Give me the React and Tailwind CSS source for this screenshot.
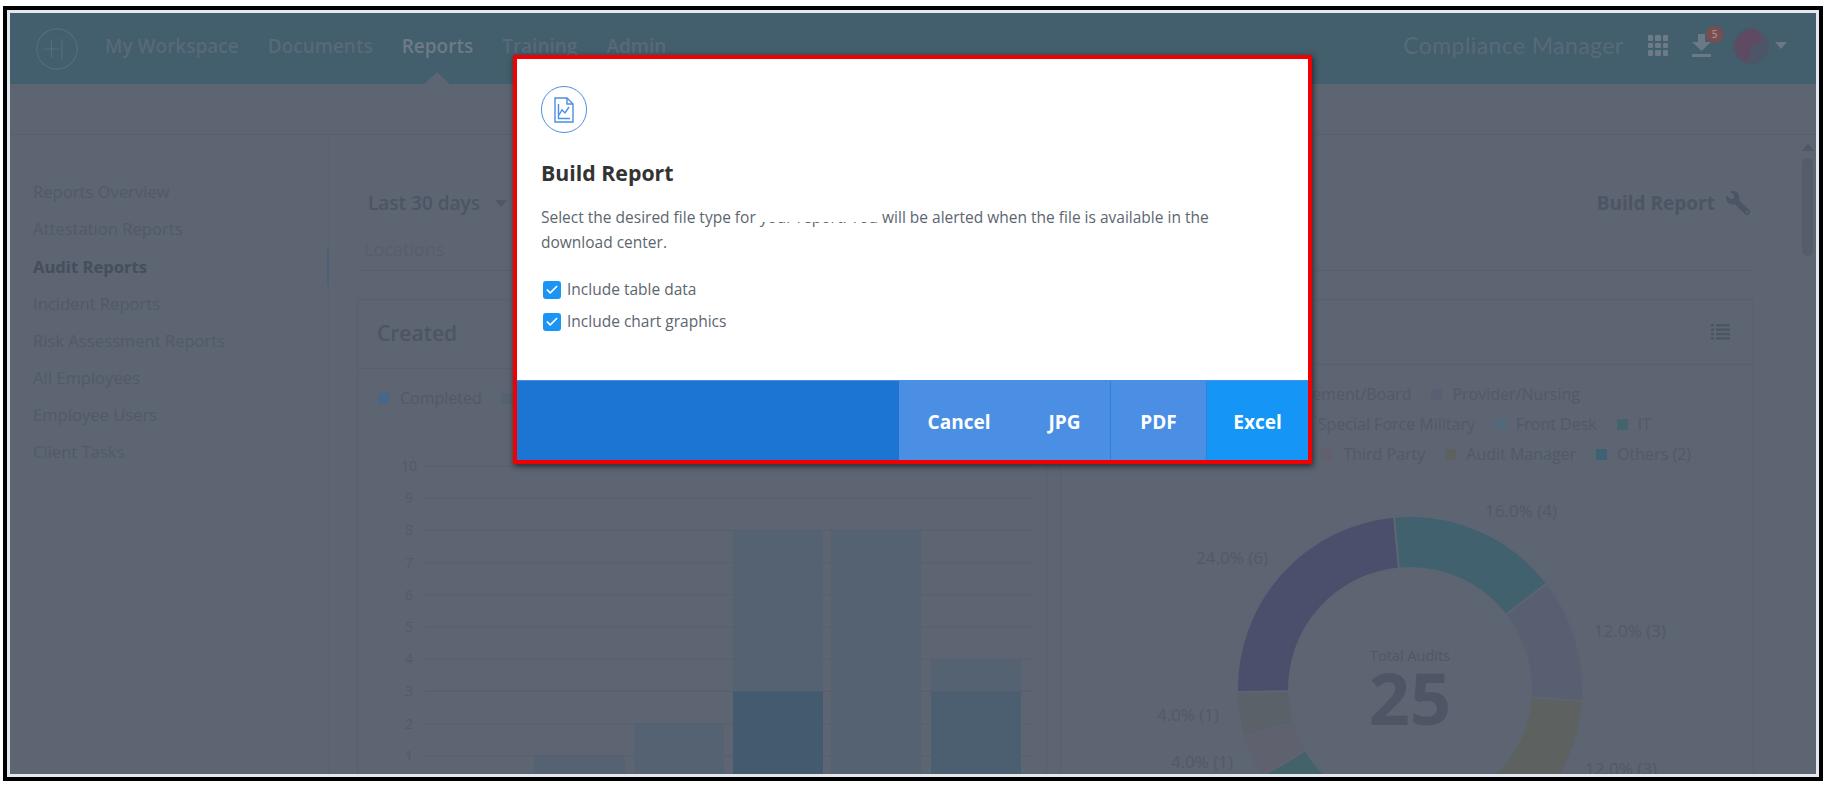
import { Check } from 'lucide-react';
import { FaWrench } from 'react-icons/fa';

const navItems = ['My Workspace', 'Documents', 'Reports', 'Training', 'Admin'];
const sideItems = ['Reports Overview', 'Attestation Reports', 'Audit Reports', 'Incident Reports', 'Risk Assessment Reports', 'All Employees', 'Employee Users', 'Client Tasks'];

const legendRows = [
  { pad: 'pr-[173px]', items: [['Management/Board', 'bg-[#566172]'], ['Provider/Nursing', 'bg-[#5a5f72]']] },
  { pad: 'pr-[102px]', items: [['Special Force Military', 'bg-[#4a5168]'], ['Front Desk', 'bg-[#51697a]'], ['IT', 'bg-[#44636c]']] },
  { pad: 'pr-[62px]', items: [['Clinical', 'bg-[#5a6169]'], ['Third Party', 'bg-[#635f6e]'], ['Audit Manager', 'bg-[#5d6160]'], ['Others (2)', 'bg-[#3f6273]']] },
];

// angles in degrees, clockwise from 12 o'clock
const segments = [
  [-5.3, 52.3, '#41616f'],
  [52.3, 94, '#585f70'],
  [94, 137, '#5d6160'],
  [137, 200, '#52606c'],
  [200, 239.5, '#436269'],
  [239.5, 254, '#5f616f'],
  [254, 269, '#5a6169'],
  [269, 354.7, '#4a4f6b'],
];

function arc(cx, cy, ro, ri, a, b) {
  const pt = (r, d) => {
    const t = (d * Math.PI) / 180;
    return `${(cx + r * Math.sin(t)).toFixed(2)} ${(cy - r * Math.cos(t)).toFixed(2)}`;
  };
  const large = b - a > 180 ? 1 : 0;
  return `M${pt(ro, a)} A${ro} ${ro} 0 ${large} 1 ${pt(ro, b)} L${pt(ri, b)} A${ri} ${ri} 0 ${large} 0 ${pt(ri, a)} Z`;
}

function BarChart() {
  const ticks = [10, 9, 8, 7, 6, 5, 4, 3, 2, 1];
  const y = (n) => 788 - n * 32.2;
  return (
    <svg width="688" height="340" className="block mt-[13px]" viewBox="358 440 688 340">
      {ticks.map((n) => (
        <g key={n}>
          <line x1="425" x2="1032" y1={y(n)} y2={y(n)} stroke="#585f6d" strokeWidth="1" />
          <text x="409" y={y(n) + 5} textAnchor="middle" fontSize="14" fill="#535b69">{n}</text>
        </g>
      ))}
      <rect x="534" y={y(1)} width="91" height="40" fill="#546272" />
      <rect x="634" y={y(2)} width="90" height="80" fill="#546272" />
      <rect x="733" y={y(8)} width="90" height="260" fill="#546272" />
      <rect x="733" y={y(3)} width="90" height="100" fill="#435a6f" />
      <rect x="831" y={y(8)} width="90" height="260" fill="#546272" />
      <rect x="931" y={y(4)} width="90" height="130" fill="#546272" />
      <rect x="931" y={y(3)} width="90" height="100" fill="#4c5f71" />
    </svg>
  );
}

function Donut() {
  const labels = [
    ['16.0% (4)', 1523, 518],
    ['24.0% (6)', 1234, 565],
    ['12.0% (3)', 1632, 638],
    ['4.0% (1)', 1190, 722],
    ['4.0% (1)', 1204, 769],
    ['12.0% (3)', 1623, 776],
  ];
  return (
    <svg width="691" height="310" className="block" viewBox="1063 482 691 310">
      {segments.map(([a, b, c]) => (
        <path key={a} d={arc(1412, 690, 173, 121, a, b)} fill={c} stroke="#5d6472" strokeWidth="2" />
      ))}
      {labels.map(([t, x, ly]) => (
        <text key={t + ly} x={x} y={ly} textAnchor="middle" fontSize="17" fill="#525a68">{t}</text>
      ))}
      <text x="1412" y="662" textAnchor="middle" fontSize="14.5" fill="#505866">Total Audits</text>
      <text x="1412" y="726" textAnchor="middle" fontSize="72" fontWeight="700" fill="#4e5564">25</text>
    </svg>
  );
}

function Logo() {
  return (
    <svg width="42" height="42" viewBox="0 0 42 42" fill="none" stroke="#566c7c" strokeWidth="1.2">
      <circle cx="21" cy="21" r="20.2" />
      <path d="M8 21h15M15.5 12v18M26 11v20" />
    </svg>
  );
}

function ReportIcon() {
  return (
    <svg width="24" height="28" viewBox="0 0 24 28" fill="none" stroke="#4a90e2" strokeWidth="1.4">
      <path d="M3 2h12l6 6v18H3z" />
      <path d="M15 2v6h6" />
      <path d="M6.5 8v14.5H18" />
      <path d="M7 19l3-5 3 3 4-6" />
    </svg>
  );
}

function ModalCheck({ label }) {
  return (
    <label className="flex items-center gap-[6px] h-[18px]">
      <span className="w-[18px] h-[18px] ml-[2px] rounded-[3px] bg-[#1a94f5] flex items-center justify-center">
        <Check size={14} strokeWidth={3} className="text-white" />
      </span>
      <span className="text-[15.5px] text-[#5c6670]">{label}</span>
    </label>
  );
}

export default function App() {
  return (
    <div className="w-[1828px] h-[786px] bg-white pl-[3px] pr-[5px] pt-[6px] pb-[5px] font-['Open_Sans',sans-serif]">
      <div className="h-full border-4 border-black">
        <div className="h-full border-[3px] border-[#e4e7ee]">
          <div className="relative h-full overflow-hidden bg-[#5d6472]">
            {/* Top nav */}
            <div className="h-[71px] bg-[#435e6c] flex items-center justify-between pl-[26px] pr-[29px]">
              <div className="flex items-center">
                <Logo />
                <div className="flex items-center gap-[29px] ml-[27px] -mt-[5px]">
                  {navItems.map((n) => (
                    <div key={n} className={`relative text-[19px] font-semibold ${n === 'Reports' ? 'text-[#6d7b88]' : 'text-[#586a79]'}`}>
                      {n}
                      {n === 'Reports' && (
                        <div className="absolute left-[21px] top-[40px] w-0 h-0 border-x-[14px] border-x-transparent border-b-[13px] border-b-[#5d6472]" />
                      )}
                    </div>
                  ))}
                </div>
              </div>
              <div className="flex items-center">
                <span className="text-[23px] text-[#586a79] font-['Lato',sans-serif] tracking-[0.4px] mr-[24px] -mt-[6px]">Compliance Manager</span>
                <div className="grid grid-cols-3 gap-[2px] mr-[24px] -mt-[6px]">
                  {[1, 2, 3, 4, 5, 6, 7, 8, 9].map((i) => (
                    <span key={i} className="w-[5.5px] h-[5.5px] rounded-[1px] bg-[#6d7a87]" />
                  ))}
                </div>
                <div className="relative mr-[22px] -mt-[6px]">
                  <svg width="19" height="24" viewBox="0 0 19 24" fill="#6b7886" className="block">
                    <path d="M6 0h7v8h6l-9.5 9L0 8h6z" />
                    <rect y="20" width="19" height="3" />
                  </svg>
                  <span className="absolute -top-[8px] left-[14px] w-[17px] h-[17px] rounded-full bg-[#7a4e50] text-[10px] font-semibold text-[#a5898c] flex items-center justify-center">5</span>
                </div>
                <svg width="36" height="36" viewBox="0 0 36 36" className="-mt-[6px] mr-[6px]">
                  <circle cx="18" cy="18" r="18" fill="#4c5668" />
                  <path d="M2 18C4 8 12 1 20 1c6 4 10 8 8 13-4 2-8 1-10 5-1 5-2 10-4 15C7 31 2 25 2 18z" fill="#5f4a62" />
                </svg>
                <span className="w-0 h-0 -mt-[6px] border-x-[6px] border-x-transparent border-t-[7px] border-t-[#6b7886]" />
              </div>
            </div>

            {/* Sub bar */}
            <div className="h-[51px] border-b border-[#585f6d]" />

            <div className="flex h-[639px]">
              {/* Sidebar */}
              <div className="w-[319px] shrink-0 border-r border-[#5a616f] pt-[39px]">
                {sideItems.map((s) => (
                  <div
                    key={s}
                    className={`h-[37.2px] pl-[23px] flex items-center text-[16.6px] -mr-[1px] ${s === 'Audit Reports' ? 'font-bold text-[#454e5d] border-r-2 border-[#4a6273]' : 'text-[#515a69]'}`}
                  >
                    {s}
                  </div>
                ))}
              </div>

              {/* Main */}
              <div className="flex-1 pl-[28px] pr-[62px] min-w-0">
                <div className="h-[135px] pt-[50px]">
                  <div className="flex items-center justify-between pl-[11px] pr-[4px] h-[36px]">
                    <div className="flex items-center gap-[15px]">
                      <span className="text-[19px] font-semibold text-[#4c5564]">Last 30 days</span>
                      <span className="w-0 h-0 border-x-[6px] border-x-transparent border-t-[7px] border-t-[#4f5866]" />
                    </div>
                    <div className="flex items-center gap-[11px]">
                      <span className="text-[19px] font-bold text-[#4c5564]">Build Report</span>
                      <FaWrench className="text-[24px] text-[#4c5564] -scale-x-100" />
                    </div>
                  </div>
                  <div className="mt-[1px] ml-[2px] h-[49px] border-b border-[#585f6d] text-[18px] text-[#575f6e] pl-[5px] pt-[14px]">Locations</div>
                </div>

                <div className="flex gap-[13px] mt-[29px]">
                  <div className="w-[690px] h-[500px] border border-[#586070] overflow-hidden">
                    <div className="h-[69px] border-b border-[#586070] flex items-center pl-[19px] text-[21px] font-semibold text-[#4c5564]">Created</div>
                    <div className="h-[58px] flex items-center pl-[20px]">
                      <span className="w-[11px] h-[11px] bg-[#47668a]" />
                      <span className="ml-[11px] text-[16px] text-[#525a68]">Completed</span>
                      <span className="ml-[20px] w-[11px] h-[11px] bg-[#546272]" />
                    </div>
                    <BarChart />
                  </div>
                  <div className="flex-1 h-[500px] border border-[#586070] overflow-hidden">
                    <div className="h-[65px] border-b border-[#586070] flex items-center justify-end pr-[23px]">
                      <svg width="19" height="16" viewBox="0 0 19 16" fill="#4c5564" className="-mt-[1px]">
                        <rect y="0" width="3" height="2.4" />
                        <rect x="5" y="0" width="14" height="2.4" />
                        <rect y="4.4" width="3" height="2.4" />
                        <rect x="5" y="4.4" width="14" height="2.4" />
                        <rect y="8.8" width="3" height="2.4" />
                        <rect x="5" y="8.8" width="14" height="2.4" />
                        <rect y="13.2" width="3" height="2.4" />
                        <rect x="5" y="13.2" width="14" height="2.4" />
                      </svg>
                    </div>
                    <div className="h-[116px] pt-[14px]">
                      {legendRows.map((row) => (
                        <div key={row.pad} className={`h-[30px] flex items-center justify-end gap-[20px] ${row.pad}`}>
                          {row.items.map(([t, c]) => (
                            <div key={t} className="flex items-center gap-[10px] whitespace-nowrap">
                              <span className={`w-[11px] h-[11px] ${c}`} />
                              <span className="text-[16px] text-[#525a68]">{t}</span>
                            </div>
                          ))}
                        </div>
                      ))}
                    </div>
                    <Donut />
                  </div>
                </div>
              </div>
            </div>

            {/* Scrollbar */}
            <div className="absolute right-[3px] top-[130px] w-[11px] flex flex-col items-center gap-[7px]">
              <span className="w-0 h-0 border-x-[6px] border-x-transparent border-b-[8px] border-b-[#515968]" />
              <span className="w-[11px] h-[98px] rounded-full bg-[#555c6b]" />
            </div>

            {/* Modal */}
            <div className="absolute left-[503px] top-[42px] w-[799px] h-[409px] border-4 border-[#f00000] bg-white flex flex-col shadow-[1px_2px_6px_rgba(0,0,0,0.6)]">
              <div className="relative flex-1 pl-[24px] pt-[27px]">
                <div className="w-[46px] h-[47px] rounded-full border border-[#4a90e2] flex items-center justify-center">
                  <ReportIcon />
                </div>
                <h2 className="mt-[25px] text-[21.3px] leading-[30px] font-bold text-[#333]">Build Report</h2>
                <p className="mt-[17px] w-[700px] text-[15.5px] leading-[25px] text-[#5c6670]">
                  Select the desired file type for your report. You will be alerted when the file is available in the download center.
                </p>
                <div className="absolute left-[242px] top-[147px] w-[122px] h-[16px] bg-white" />
                <div className="mt-[26px] flex flex-col gap-[14px]">
                  <ModalCheck label="Include table data" />
                  <ModalCheck label="Include chart graphics" />
                </div>
              </div>
              <div className="h-[80px] shrink-0 bg-[#1c75d3] border-t border-[#4a90e2] flex justify-end text-[19px] font-bold text-white">
                <button className="w-[120px] bg-[#4a8fe3] pt-[3px]">Cancel</button>
                <button className="w-[92px] bg-[#4a8fe3] border-r border-[#2f7fdc] pt-[3px]">JPG</button>
                <button className="w-[96px] bg-[#4a8fe3] border-r border-[#2f7fdc] pt-[3px]">PDF</button>
                <button className="w-[101px] bg-[#1595f5] pt-[3px]">Excel</button>
              </div>
            </div>
          </div>
        </div>
      </div>
    </div>
  );
}
